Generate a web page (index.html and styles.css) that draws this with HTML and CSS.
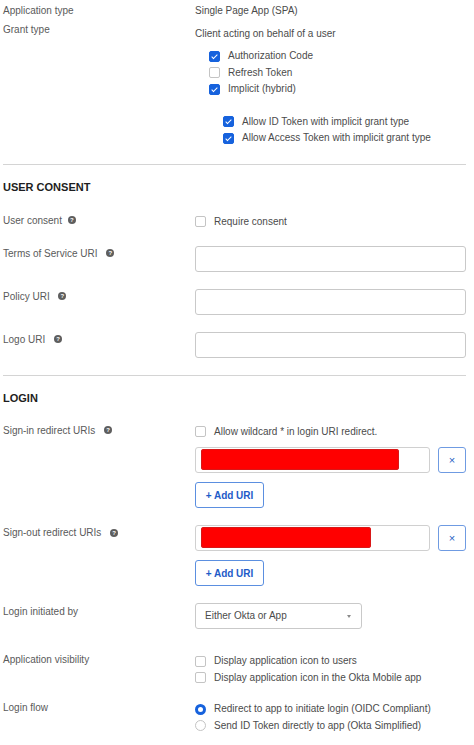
FILE: index.html
```html
<!DOCTYPE html>
<html lang="en">
<head>
  <meta charset="UTF-8" />
  <title>General Settings</title>
  <link rel="stylesheet" href="styles.css">
</head>
<body>
  <div class="page">
    <div class="row app-type">
      <div class="label">Application type</div>
      <div class="value">Single Page App (SPA)</div>
    </div>
    <div class="row grant">
      <div class="label">Grant type</div>
      <div class="value">
        <div class="note">Client acting on behalf of a user</div>
        <ul class="checks grants">
          <li><span class="box on"></span>Authorization Code</li>
          <li><span class="box"></span>Refresh Token</li>
          <li><span class="box on"></span>Implicit (hybrid)</li>
        </ul>
        <ul class="checks implicit">
          <li><span class="box on"></span>Allow ID Token with implicit grant type</li>
          <li><span class="box on"></span>Allow Access Token with implicit grant type</li>
        </ul>
      </div>
    </div>

    <hr class="divider">
    <h2 class="heading">USER CONSENT</h2>

    <div class="row consent">
      <div class="label">User consent<span class="help">?</span></div>
      <div class="value">
        <ul class="checks">
          <li><span class="box"></span>Require consent</li>
        </ul>
      </div>
    </div>
    <div class="row field first-field">
      <div class="label">Terms of Service URI <span class="help">?</span></div>
      <div class="value"><input class="text-input" type="text"></div>
    </div>
    <div class="row field">
      <div class="label">Policy URI <span class="help">?</span></div>
      <div class="value"><input class="text-input" type="text"></div>
    </div>
    <div class="row field">
      <div class="label">Logo URI <span class="help">?</span></div>
      <div class="value"><input class="text-input" type="text"></div>
    </div>

    <hr class="divider">
    <h2 class="heading">LOGIN</h2>

    <div class="row signin">
      <div class="label">Sign-in redirect URIs <span class="help">?</span></div>
      <div class="value">
        <ul class="checks">
          <li><span class="box"></span>Allow wildcard * in login URI redirect.</li>
        </ul>
        <div class="uri-row">
          <div class="uri-input"><span class="redacted long"></span></div>
          <button class="remove">&times;</button>
        </div>
        <button class="add-uri">+ Add URI</button>
      </div>
    </div>
    <div class="row signout">
      <div class="label">Sign-out redirect URIs <span class="help">?</span></div>
      <div class="value">
        <div class="uri-row first">
          <div class="uri-input"><span class="redacted short"></span></div>
          <button class="remove">&times;</button>
        </div>
        <button class="add-uri">+ Add URI</button>
      </div>
    </div>

    <div class="row initiated">
      <div class="label">Login initiated by</div>
      <div class="value">
        <div class="select">Either Okta or App<span class="caret"></span></div>
      </div>
    </div>
    <div class="row visibility">
      <div class="label">Application visibility</div>
      <div class="value">
        <ul class="checks">
          <li><span class="box"></span>Display application icon to users</li>
          <li><span class="box"></span>Display application icon in the Okta Mobile app</li>
        </ul>
      </div>
    </div>
    <div class="row flow">
      <div class="label">Login flow</div>
      <div class="value">
        <ul class="checks">
          <li><span class="radio on"></span>Redirect to app to initiate login (OIDC Compliant)</li>
          <li><span class="radio"></span>Send ID Token directly to app (Okta Simplified)</li>
        </ul>
      </div>
    </div>
  </div>
</body>
</html>
```

FILE: styles.css
```css
body {
  margin: 0;
  background: #fff;
  font-family: "Liberation Sans", Arial, sans-serif;
  font-size: 10px;
  color: #4b4b4b;
}
.page {
  width: 463px;
  padding-left: 3px;
}
.row {
  display: flex;
  line-height: 14px;
}
.label {
  width: 192px;
  flex: none;
  color: #5a5a5a;
}
.value {
  flex: 1;
  min-width: 0;
}
.app-type {
  margin-top: 4px;
}
.grant {
  margin-top: 5px;
}
.note {
  margin-top: 4px;
}
.checks {
  list-style: none;
  margin: 0;
  padding: 0;
}
.checks li {
  display: flex;
  align-items: center;
  gap: 8px;
  height: 16.5px;
}
.checks.grants {
  margin-top: 7px;
  padding-left: 14px;
}
.checks.implicit {
  margin-top: 16px;
  padding-left: 28px;
}
.box, .radio {
  flex: none;
  width: 11px;
  height: 11px;
  box-sizing: border-box;
  border: 1px solid #c4c4c4;
  border-radius: 2px;
  background: #fff;
  position: relative;
}
.box.on {
  background: #1662dd;
  border-color: #1662dd;
}
.box.on::after {
  content: "";
  position: absolute;
  left: 3px;
  top: 1px;
  width: 2px;
  height: 5px;
  border: solid #fff;
  border-width: 0 1.5px 1.5px 0;
  transform: rotate(45deg);
}
.radio {
  border-radius: 50%;
}
.radio.on {
  border: 3px solid #1662dd;
}
.divider {
  margin: 17px 0 0;
  border: 0;
  border-top: 1px solid #d4d4d4;
}
.heading {
  margin: 15px 0 0;
  font-size: 11px;
  line-height: 14px;
  font-weight: bold;
  color: #1d1d21;
}
.help {
  display: inline-block;
  overflow: hidden;
  width: 8px;
  height: 8px;
  margin-left: 6px;
  border-radius: 50%;
  background: #5e5e5e;
  color: #fff;
  font-size: 6px;
  font-weight: bold;
  line-height: 8px;
  text-align: center;
  vertical-align: -0.5px;
}
.consent {
  margin-top: 20px;
}
.field {
  margin-top: 17px;
}
.field.first-field {
  margin-top: 15.5px;
}
.field .label, .signout .label {
  padding-top: 1px;
}
.text-input {
  display: block;
  width: 100%;
  height: 26px;
  box-sizing: border-box;
  margin: 0;
  border: 1px solid #c9c9c9;
  border-radius: 3px;
  background: #fff;
}
.signin {
  margin-top: 19px;
}
.uri-row {
  display: flex;
  gap: 8px;
  margin-top: 7px;
}
.uri-row.first {
  margin-top: 0;
}
.uri-input {
  width: 235px;
  height: 26px;
  box-sizing: border-box;
  border: 1px solid #d0d0d0;
  border-radius: 3px;
  padding: 1px 0 0 5px;
}
.redacted {
  display: block;
  height: 21px;
  background: #ff0000;
  border-radius: 3px;
  box-shadow: inset 0 0 0 1px #d81818;
}
.redacted.long {
  width: 198px;
}
.redacted.short {
  width: 170px;
}
.remove {
  width: 28px;
  height: 26px;
  padding: 0;
  border: 1px solid #6f9be2;
  border-radius: 3px;
  background: #fff;
  color: #2a5fc4;
  font-family: inherit;
  font-size: 11px;
  line-height: 24px;
}
.add-uri {
  display: block;
  width: 69px;
  height: 26px;
  margin-top: 9px;
  padding: 0;
  border: 1px solid #5b8fe0;
  border-radius: 3px;
  background: #fff;
  color: #1e5bc8;
  font-family: inherit;
  font-size: 10px;
  font-weight: bold;
}
.signout {
  margin-top: 17px;
}
.initiated {
  margin-top: 17px;
}
.initiated .label {
  padding-top: 2px;
}
.select {
  display: flex;
  align-items: center;
  justify-content: space-between;
  width: 167px;
  height: 26px;
  box-sizing: border-box;
  padding: 0 10px 0 9px;
  border: 1px solid #c9c9c9;
  border-radius: 3px;
  color: #4b4b4b;
}
.caret {
  width: 0;
  height: 0;
  border-left: 2.5px solid transparent;
  border-right: 2.5px solid transparent;
  border-top: 3px solid #8a8a8a;
}
.visibility {
  margin-top: 24px;
}
.flow {
  margin-top: 15px;
}
```
